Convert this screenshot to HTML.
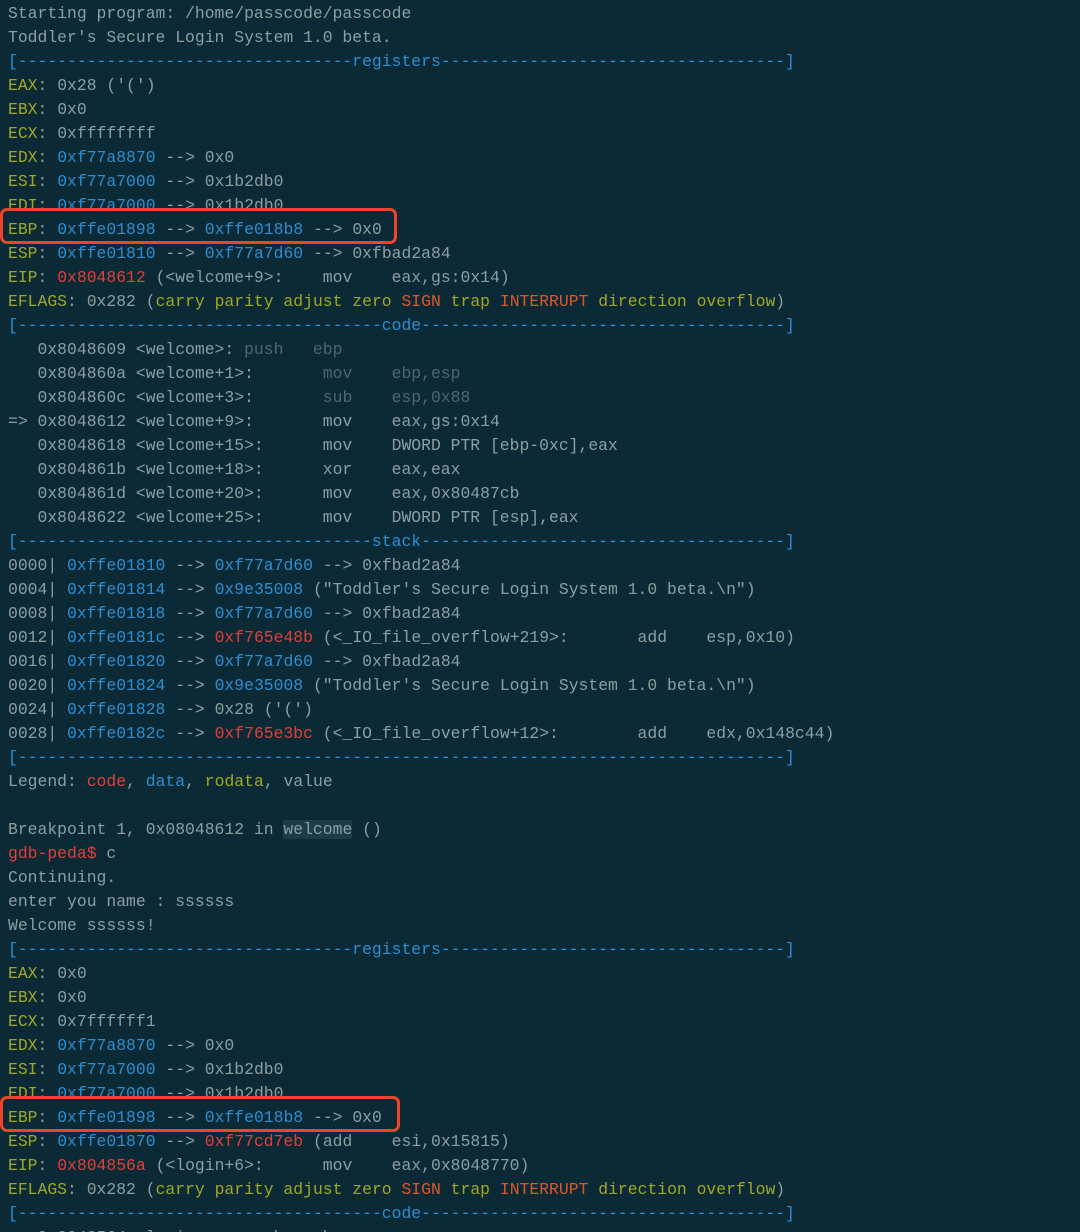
<!DOCTYPE html>
<html><head><meta charset="utf-8"><style>
html,body{margin:0;padding:0;background:#0b2a35;width:1080px;height:1232px;overflow:hidden}
pre{margin:0;padding:2px 0 0 8px;font-family:"Liberation Mono",monospace;font-size:16.4px;line-height:24px;color:#8d9fa1;white-space:pre}
.y{color:#a1a826}.b{color:#2f8ed0}.r{color:#e0403a}.o{color:#e0562a}.g{color:#4f6770}
.h{background:#1b3d48}
.box{position:absolute;border:3px solid #f0432c;border-radius:7px}
</style></head><body>
<pre>Starting program: /home/passcode/passcode
Toddler's Secure Login System 1.0 beta.
<span class="b">[----------------------------------registers-----------------------------------]</span>
<span class="y">EAX</span>: 0x28 ('(')
<span class="y">EBX</span>: 0x0
<span class="y">ECX</span>: 0xffffffff
<span class="y">EDX</span>: <span class="b">0xf77a8870</span> --&gt; 0x0
<span class="y">ESI</span>: <span class="b">0xf77a7000</span> --&gt; 0x1b2db0
<span class="y">EDI</span>: <span class="b">0xf77a7000</span> --&gt; 0x1b2db0
<span class="y">EBP</span>: <span class="b">0xffe01898</span> --&gt; <span class="b">0xffe018b8</span> --&gt; 0x0
<span class="y">ESP</span>: <span class="b">0xffe01810</span> --&gt; <span class="b">0xf77a7d60</span> --&gt; 0xfbad2a84
<span class="y">EIP</span>: <span class="r">0x8048612</span> (&lt;welcome+9&gt;:    mov    eax,gs:0x14)
<span class="y">EFLAGS</span>: 0x282 (<span class="y">carry parity adjust zero </span><span class="o">SIGN</span><span class="y"> trap </span><span class="o">INTERRUPT</span><span class="y"> direction overflow</span>)
<span class="b">[-------------------------------------code-------------------------------------]</span>
   0x8048609 &lt;welcome&gt;: <span class="g">push   ebp</span>
   0x804860a &lt;welcome+1&gt;:       <span class="g">mov    ebp,esp</span>
   0x804860c &lt;welcome+3&gt;:       <span class="g">sub    esp,0x88</span>
=&gt; 0x8048612 &lt;welcome+9&gt;:       mov    eax,gs:0x14
   0x8048618 &lt;welcome+15&gt;:      mov    DWORD PTR [ebp-0xc],eax
   0x804861b &lt;welcome+18&gt;:      xor    eax,eax
   0x804861d &lt;welcome+20&gt;:      mov    eax,0x80487cb
   0x8048622 &lt;welcome+25&gt;:      mov    DWORD PTR [esp],eax
<span class="b">[------------------------------------stack-------------------------------------]</span>
0000| <span class="b">0xffe01810</span> --&gt; <span class="b">0xf77a7d60</span> --&gt; 0xfbad2a84
0004| <span class="b">0xffe01814</span> --&gt; <span class="b">0x9e35008</span> ("Toddler's Secure Login System 1.0 beta.\n")
0008| <span class="b">0xffe01818</span> --&gt; <span class="b">0xf77a7d60</span> --&gt; 0xfbad2a84
0012| <span class="b">0xffe0181c</span> --&gt; <span class="r">0xf765e48b</span> (&lt;_IO_file_overflow+219&gt;:       add    esp,0x10)
0016| <span class="b">0xffe01820</span> --&gt; <span class="b">0xf77a7d60</span> --&gt; 0xfbad2a84
0020| <span class="b">0xffe01824</span> --&gt; <span class="b">0x9e35008</span> ("Toddler's Secure Login System 1.0 beta.\n")
0024| <span class="b">0xffe01828</span> --&gt; 0x28 ('(')
0028| <span class="b">0xffe0182c</span> --&gt; <span class="r">0xf765e3bc</span> (&lt;_IO_file_overflow+12&gt;:        add    edx,0x148c44)
<span class="b">[------------------------------------------------------------------------------]</span>
Legend: <span class="r">code</span>, <span class="b">data</span>, <span class="y">rodata</span>, value

Breakpoint 1, 0x08048612 in <span class="h">welcome</span> ()
<span class="r">gdb-peda$ </span>c
Continuing.
enter you name : ssssss
Welcome ssssss!
<span class="b">[----------------------------------registers-----------------------------------]</span>
<span class="y">EAX</span>: 0x0
<span class="y">EBX</span>: 0x0
<span class="y">ECX</span>: 0x7ffffff1
<span class="y">EDX</span>: <span class="b">0xf77a8870</span> --&gt; 0x0
<span class="y">ESI</span>: <span class="b">0xf77a7000</span> --&gt; 0x1b2db0
<span class="y">EDI</span>: <span class="b">0xf77a7000</span> --&gt; 0x1b2db0
<span class="y">EBP</span>: <span class="b">0xffe01898</span> --&gt; <span class="b">0xffe018b8</span> --&gt; 0x0
<span class="y">ESP</span>: <span class="b">0xffe01870</span> --&gt; <span class="r">0xf77cd7eb</span> (add    esi,0x15815)
<span class="y">EIP</span>: <span class="r">0x804856a</span> (&lt;login+6&gt;:      mov    eax,0x8048770)
<span class="y">EFLAGS</span>: 0x282 (<span class="y">carry parity adjust zero </span><span class="o">SIGN</span><span class="y"> trap </span><span class="o">INTERRUPT</span><span class="y"> direction overflow</span>)
<span class="b">[-------------------------------------code-------------------------------------]</span>
   0x8048564 &lt;login&gt;:   push   ebp
</pre>
<div class="box" style="left:0;top:208px;width:391px;height:30px"></div>
<div class="box" style="left:0;top:1096px;width:394px;height:30px"></div>
</body></html>
